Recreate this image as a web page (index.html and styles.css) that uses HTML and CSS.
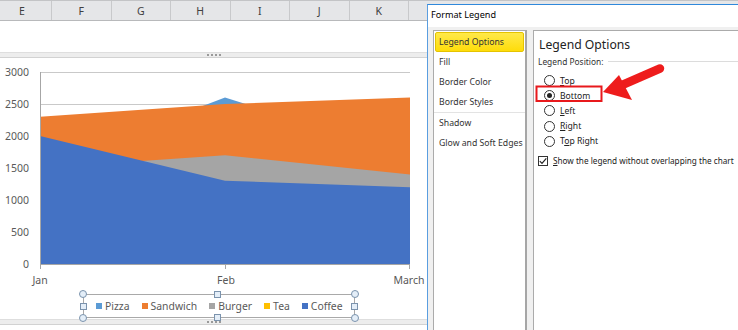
FILE: index.html
```html
<!DOCTYPE html>
<html>
<head>
<meta charset="utf-8">
<link rel="stylesheet" href="styles.css">
</head>
<body>
<div class="screen">
  <div class="sheet">
    <div class="colhdr">
      <div class="col col-e">E</div>
      <div class="col">F</div>
      <div class="col">G</div>
      <div class="col">H</div>
      <div class="col">I</div>
      <div class="col">J</div>
      <div class="col">K</div>
      <div class="col col-rest"></div>
    </div>
    <div class="blank"></div>
    <div class="split"><span class="grip"></span></div>
    <div class="chart">
      <svg class="plot" width="427" height="232" viewBox="0 0 427 232">
        <g stroke="#c9c9c9" stroke-width="1">
          <line x1="40" y1="14.5" x2="410" y2="14.5"/>
          <line x1="40" y1="46.5" x2="410" y2="46.5"/>
          <line x1="40" y1="78.5" x2="410" y2="78.5"/>
          <line x1="40" y1="110.5" x2="410" y2="110.5"/>
          <line x1="40" y1="142.5" x2="410" y2="142.5"/>
          <line x1="40" y1="174.5" x2="410" y2="174.5"/>
        </g>
        <polygon fill="#5b9bd5" points="40,206 40,110 225,39.6 410,97.2 410,206"/>
        <polygon fill="#ed7d31" points="40,206 40,58.8 225,46 410,39.6 410,206"/>
        <polygon fill="#a5a5a5" points="40,206 40,110 225,97.2 410,116.4 410,206"/>
        <polygon fill="#ffc000" points="40,206 40,180.4 225,174 410,167.6 410,206"/>
        <polygon fill="#4472c4" points="40,206 40,78 225,122.8 410,129.2 410,206"/>
        <g stroke="#a6a6a6" stroke-width="1">
          <line x1="40.5" y1="14" x2="40.5" y2="206"/>
          <line x1="40" y1="206.5" x2="410" y2="206.5"/>
          <line x1="40.5" y1="206" x2="40.5" y2="211"/>
          <line x1="225.5" y1="206" x2="225.5" y2="211"/>
          <line x1="409.5" y1="206" x2="409.5" y2="211"/>
        </g>
        <g class="ylab" text-anchor="end">
          <text x="29" y="17.8">3000</text>
          <text x="29" y="49.8">2500</text>
          <text x="29" y="81.8">2000</text>
          <text x="29" y="113.8">1500</text>
          <text x="29" y="145.8">1000</text>
          <text x="29" y="177.8">500</text>
          <text x="29" y="209.8">0</text>
        </g>
        <g class="xlab" text-anchor="middle">
          <text x="40" y="225.5">Jan</text>
          <text x="226" y="225.5">Feb</text>
          <text x="409" y="225.5">March</text>
        </g>
      </svg>
      <div class="legendrow">
        <div class="legend">
          <div class="lg"><span class="mk pizza"></span>Pizza</div>
          <div class="lg"><span class="mk sandwich"></span>Sandwich</div>
          <div class="lg"><span class="mk burger"></span>Burger</div>
          <div class="lg"><span class="mk tea"></span>Tea</div>
          <div class="lg"><span class="mk coffee"></span>Coffee</div>
          <span class="h c tl"></span><span class="h c tr"></span>
          <span class="h c bl"></span><span class="h c br"></span>
          <span class="h s tm"></span><span class="h s bm"></span>
          <span class="h s lm"></span><span class="h s rm"></span>
        </div>
      </div>
      <div class="split bottom"><span class="grip"></span></div>
    </div>
  </div>

  <div class="dialog">
    <div class="title">Format Legend</div>
    <div class="body">
      <div class="nav">
        <div class="item sel">Legend Options</div>
        <div class="item">Fill</div>
        <div class="item">Border Color</div>
        <div class="item">Border Styles</div>
        <div class="sep"></div>
        <div class="item">Shadow</div>
        <div class="item">Glow and Soft Edges</div>
      </div>
      <div class="main">
        <div class="heading">Legend Options</div>
        <div class="group"><span>Legend Position:</span><span class="rule"></span></div>
        <div class="radios">
          <div class="radio"><span class="dot"></span><span><u>T</u>op</span></div>
          <div class="radio"><span class="dot on"></span><span><u>B</u>ottom</span></div>
          <div class="radio"><span class="dot"></span><span><u>L</u>eft</span></div>
          <div class="radio"><span class="dot"></span><span><u>R</u>ight</span></div>
          <div class="radio"><span class="dot"></span><span>T<u>o</u>p Right</span></div>
        </div>
        <div class="check">
          <span class="box"><svg width="10" height="10" viewBox="0 0 10 10"><path d="M1.8 5.2 L4 7.4 L8.3 2.4" fill="none" stroke="#222" stroke-width="1.2"/></svg></span>
          <span class="cklabel"><u>S</u>how the legend without overlapping the chart</span>
        </div>
      </div>
    </div>
  </div>

  <svg class="annot" width="738" height="330" viewBox="0 0 738 330">
    <rect x="536.5" y="86.5" width="65" height="14.5" fill="none" stroke="#e8191c" stroke-width="2"/>
    <line x1="660" y1="68.5" x2="621" y2="85.5" stroke="#ee1c1c" stroke-width="8.5" stroke-linecap="round"/>
    <polygon fill="#ee1c1c" points="603,92 619,75 632,100"/>
  </svg>
</div>
</body>
</html>
```

FILE: styles.css
```css
* { box-sizing: border-box; }
html, body { margin: 0; padding: 0; background: #fff; }
.screen {
  position: relative;
  width: 738px;
  height: 330px;
  overflow: hidden;
  font-family: "Noto Sans", "DejaVu Sans", sans-serif;
}
.sheet { width: 738px; }
.colhdr {
  display: flex;
  height: 21px;
  background: #e5e6e8;
  border-top: 1px solid #c3c4c6;
  border-bottom: 1px solid #b8b9bb;
}
.col {
  width: 59.5px;
  flex: none;
  display: flex;
  align-items: center;
  justify-content: center;
  border-right: 1px solid #c8c9cb;
  font-size: 10.5px;
  color: #404040;
}
.col-e { width: 52px; padding-right: 7px; }
.col-rest { flex: 1; border-right: none; }
.blank { height: 31px; background: #fff; }
.split {
  height: 6px;
  background: #ededed;
  border-top: 1px solid #dedede;
  border-bottom: 1px solid #d2d2d2;
  display: flex;
  justify-content: center;
  align-items: center;
  width: 427px;
}
.grip {
  width: 14px;
  height: 2px;
  background: repeating-linear-gradient(90deg, #9a9a9a 0 2px, transparent 2px 4px);
}
.chart {
  width: 427px;
  background: #fff;
}
.plot { display: block; }
.ylab text, .xlab text { font-size: 10.5px; fill: #595959; font-family: "Noto Sans", "DejaVu Sans", sans-serif; }
.legendrow {
  height: 29px;
  padding-top: 4px;
  padding-left: 83px;
}
.legend {
  position: relative;
  width: 272px;
  height: 24px;
  border: 1px solid #a9a9a9;
  display: flex;
  align-items: center;
  gap: 12px;
  padding-left: 12px;
  font-size: 10.4px;
  color: #595959;
}
.lg { display: flex; align-items: center; gap: 3px; white-space: nowrap; }
.mk { width: 6px; height: 6px; display: inline-block; }
.pizza { background: #5b9bd5; }
.sandwich { background: #ed7d31; }
.burger { background: #a5a5a5; }
.tea { background: #ffc000; }
.coffee { background: #4472c4; }
.h {
  position: absolute;
  width: 7px;
  height: 7px;
  background: #e4eef8;
  border: 1px solid #7b93ad;
}
.h.c { border-radius: 50%; width: 8px; height: 8px; }
.tl { left: -5px; top: -5px; }
.tr { right: -5px; top: -5px; }
.bl { left: -5px; bottom: -5px; }
.br { right: -5px; bottom: -5px; }
.tm { left: 130px; top: -4px; }
.bm { left: 130px; bottom: -4px; }
.lm { left: -4px; top: 7.5px; }
.rm { right: -4px; top: 7.5px; }
.split.bottom { width: 427px; }

.dialog {
  position: absolute;
  left: 427px;
  top: 4px;
  width: 320px;
  height: 330px;
  border-left: 1px solid #5a9ee0;
  border-top: 1px solid #2f88db;
  background: #f0f0f0;
  display: flex;
  flex-direction: column;
}
.title {
  height: 22px;
  background: #fff;
  padding-left: 3px;
  padding-bottom: 4px;
  font-size: 9.1px;
  color: #000;
  display: flex;
  align-items: center;
}
.body {
  flex: 1;
  display: flex;
  padding: 3px 0 0 5px;
  gap: 6px;
}
.nav {
  width: 94px;
  flex: none;
  background: #fff;
  border: 1px solid #ababab;
  border-right: 2px solid #a6a6a6;
  padding: 1px;
  font-size: 8.7px;
  color: #333;
}
.item {
  height: 20px;
  line-height: 20px;
  padding-left: 4px;
  white-space: nowrap;
}
.item.sel {
  background: linear-gradient(#ffe94a, #fedc0a);
  border: 1px solid #e5c300;
  border-radius: 2px;
  line-height: 18px;
  padding-left: 3px;
}
.sep { height: 1px; background: #e3e3e3; margin: 0 -1px; }
.main {
  flex: 1;
  background: #fff;
  border-left: 1px solid #ababab;
  border-top: 1px solid #ababab;
  padding: 4px 0 0 4px;
  font-size: 8.6px;
  color: #222;
}
.heading {
  height: 20px;
  line-height: 20px;
  font-size: 12.2px;
  padding-left: 1px;
  color: #222;
}
.group {
  display: flex;
  align-items: center;
  gap: 5px;
  height: 12px;
  font-size: 8.4px;
  color: #333;
}
.rule { flex: 1; height: 1px; background: #dcdcdc; }
.radios { padding-top: 6px; padding-left: 6px; }
.radio {
  display: flex;
  align-items: center;
  gap: 5px;
  height: 15.2px;
}
.dot {
  width: 11px;
  height: 11px;
  border: 1px solid #333;
  border-radius: 50%;
  background: #fff;
  display: flex;
  align-items: center;
  justify-content: center;
}
.dot.on::after {
  content: "";
  width: 5px;
  height: 5px;
  border-radius: 50%;
  background: #222;
}
.check {
  display: flex;
  align-items: center;
  gap: 5px;
  margin-top: 6px;
  height: 12px;
  white-space: nowrap;
}
.cklabel { font-size: 8.2px; }
.box {
  width: 10px;
  height: 10px;
  flex: none;
  border: 1px solid #333;
  display: flex;
  align-items: center;
  justify-content: center;
}
.box svg { display: block; margin: -1px; }
u { text-decoration-thickness: 1px; text-underline-offset: 1px; }
.annot { position: absolute; left: 0; top: 0; pointer-events: none; }
```
